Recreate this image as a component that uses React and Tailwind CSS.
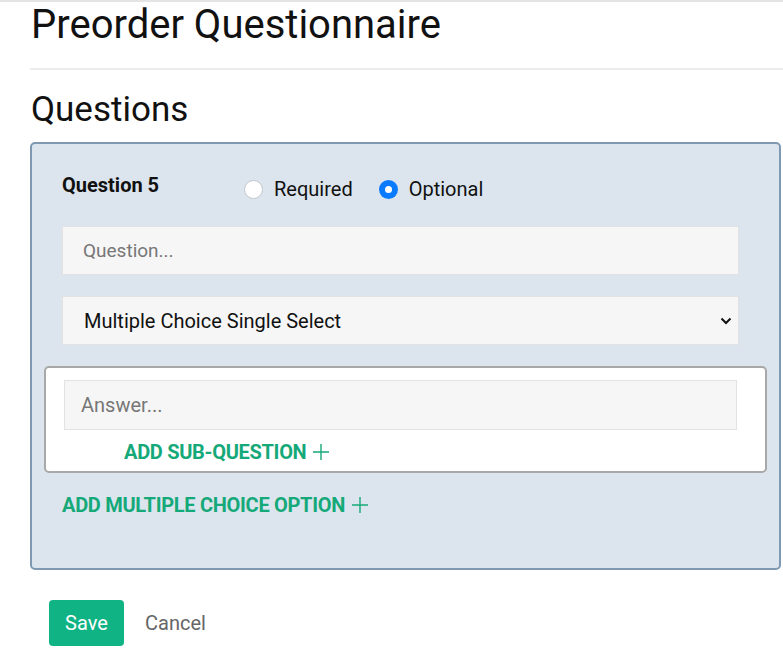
import { useState } from 'react';

function Plus() {
  return (
    <svg width="18" height="18" viewBox="0 0 18 18" className="ml-[6px] inline-block">
      <path d="M9 1v16M1 9h16" stroke="currentColor" strokeWidth="1.4" />
    </svg>
  );
}

function Radio({ checked, label, onClick }) {
  return (
    <label className="flex items-center gap-[11px] cursor-pointer" onClick={onClick}>
      {checked ? (
        <span className="w-[19px] h-[19px] rounded-full bg-[#0a7bff] flex items-center justify-center">
          <span className="w-[7px] h-[7px] rounded-full bg-white" />
        </span>
      ) : (
        <span className="w-[19px] h-[19px] rounded-full bg-white border border-[#c4c8cc]" />
      )}
      <span>{label}</span>
    </label>
  );
}

export default function App() {
  const [required, setRequired] = useState(false);

  return (
    <div className="min-h-[651px] bg-white border-t-2 border-[#e4e4e4] font-['Roboto',sans-serif] text-[#111]">
      <div className="pl-[30px]">
        <h1 className="text-[40px] leading-[46px] pl-[1px] font-normal">Preorder Questionnaire</h1>
        <hr className="mt-[20px] border-t-2 border-[#ececec]" />
        <h2 className="text-[35px] leading-[40px] mt-[20px] pl-[1px]">Questions</h2>

        <div className="mt-[12px] w-[751px] h-[428px] bg-[#dce5ee] border-2 border-[#7e99b1] rounded-[5px] pt-[29px] pl-[30px] pr-[40px]">
          {/* cabecera de la pregunta */}
          <div className="flex items-start">
            <span className="w-[182px] text-[20px] leading-[24px] font-bold">Question 5</span>
            <div className="flex items-center gap-[26px] text-[20px] leading-[24px] mt-[4px]">
              <Radio checked={required} label="Required" onClick={() => setRequired(true)} />
              <Radio checked={!required} label="Optional" onClick={() => setRequired(false)} />
            </div>
          </div>

          <input
            className="block mt-[25px] w-[677px] h-[49px] bg-[#f6f6f6] border border-[#e2e2e2] px-[20px] text-[19px] placeholder:text-[#777] outline-none"
            placeholder="Question..."
          />

          <div className="relative mt-[21px] w-[677px] h-[49px] bg-[#f6f6f6] border border-[#e2e2e2] flex items-center pl-[21px] text-[20px]">
            <span>Multiple Choice Single Select</span>
            <svg width="12" height="8" viewBox="0 0 12 8" className="absolute right-[6px] top-[20px]">
              <path d="M1.5 1.5 6 6l4.5-4.5" stroke="#111" strokeWidth="2" fill="none" />
            </svg>
          </div>

          {/* opción de respuesta */}
          <div className="mt-[21px] -ml-[18px] w-[723px] h-[107px] bg-white border-2 border-[#a8a8a8] rounded-[5px] pt-[12px] pl-[18px]">
            <input
              className="block w-[673px] h-[50px] bg-[#f6f6f6] border border-[#e2e2e2] px-[16px] text-[20px] placeholder:text-[#777] outline-none"
              placeholder="Answer..."
            />
            <button className="mt-[10px] ml-[60px] flex items-center leading-[24px] text-[#15a979] font-bold text-[20px] tracking-[-0.3px]">
              ADD SUB-QUESTION <Plus />
            </button>
          </div>

          <button className="mt-[20px] flex items-center leading-[24px] text-[#15a979] font-bold text-[20px] tracking-[-0.3px]">
            ADD MULTIPLE CHOICE OPTION <Plus />
          </button>
        </div>

        <div className="mt-[30px] ml-[19px] flex items-center gap-[21px]">
          <button className="w-[75px] h-[46px] rounded-[4px] bg-[#10b384] text-white text-[20px]">Save</button>
          <button className="text-[20px] text-[#666]">Cancel</button>
        </div>
      </div>
    </div>
  );
}
